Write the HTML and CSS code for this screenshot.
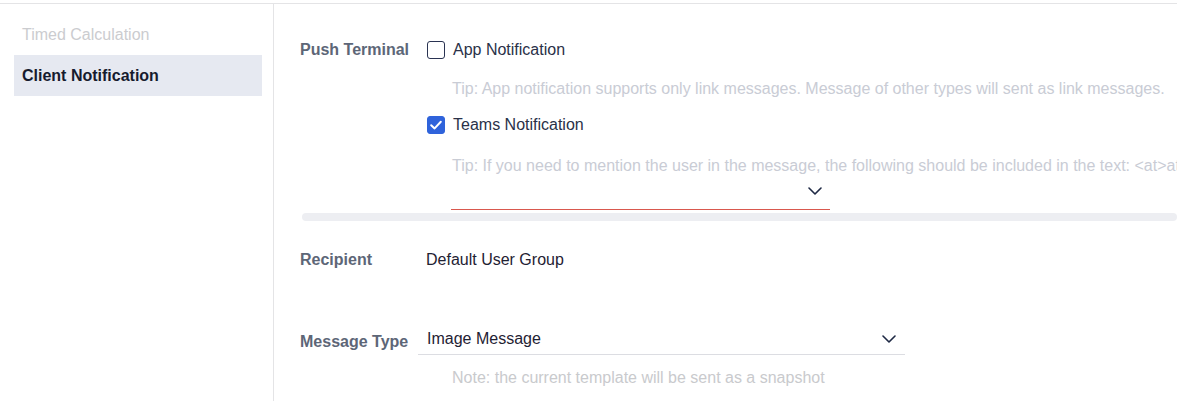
FILE: index.html
```html
<!DOCTYPE html>
<html>
<head>
<meta charset="utf-8">
<link rel="stylesheet" href="styles.css">
</head>
<body>
<div class="frame">
  <aside class="sidebar">
    <div class="nav-item">Timed Calculation</div>
    <div class="nav-item active">Client Notification</div>
  </aside>
  <main class="main">
    <section class="push">
      <div class="row">
        <div class="label label-push">Push Terminal</div>
        <div class="content">
          <div class="opt opt-first">
            <span class="box"></span>
            <span class="opt-text">App Notification</span>
          </div>
          <div class="tip tip-first">Tip: App notification supports only link messages. Message of other types will sent as link messages.</div>
          <div class="opt opt-second">
            <span class="box checked">
              <svg viewBox="0 0 18 18" width="18" height="18"><path d="M4.2 9.2 L7.6 12.4 L13.8 5.8" fill="none" stroke="#fff" stroke-width="2" stroke-linecap="round" stroke-linejoin="round"/></svg>
            </span>
            <span class="opt-text">Teams Notification</span>
          </div>
          <div class="tip tip-second">Tip: If you need to mention the user in the message, the following should be included in the text: &lt;at&gt;at&lt;/at&gt; and the user name will be replaced automatically.</div>
          <div class="select select-teams error">
            <span class="select-value"></span>
            <svg class="chev" viewBox="0 0 14 8" width="14" height="8"><path d="M1 1 L7 7 L13 1" fill="none" stroke="#1e2944" stroke-width="1.6" stroke-linecap="round" stroke-linejoin="round"/></svg>
          </div>
        </div>
      </div>
      <div class="track"></div>
    </section>
    <div class="row row-recipient">
      <div class="label">Recipient</div>
      <div class="content value">Default User Group</div>
    </div>
    <div class="row row-type">
      <div class="label label-type">Message Type</div>
      <div class="content">
        <div class="select select-type">
          <span class="select-value">Image Message</span>
          <svg class="chev" viewBox="0 0 14 8" width="14" height="8"><path d="M1 1 L7 7 L13 1" fill="none" stroke="#1e2944" stroke-width="1.6" stroke-linecap="round" stroke-linejoin="round"/></svg>
        </div>
        <div class="note">Note: the current template will be sent as a snapshot</div>
      </div>
    </div>
  </main>
</div>
</body>
</html>
```
FILE: styles.css
```css
html, body {
  margin: 0;
  padding: 0;
  background: #ffffff;
  overflow: hidden;
}
body {
  font-family: "Liberation Sans", Arial, sans-serif;
  font-size: 16px;
  color: #1f2233;
}
.frame {
  margin-top: 3px;
  border-top: 1px solid #e4e4e6;
  display: flex;
  height: 397px;
}
.sidebar {
  width: 248px;
  flex: 0 0 248px;
  padding: 10px 11px 0 14px;
  border-right: 1px solid #e4e4e6;
}
.nav-item {
  height: 41px;
  line-height: 41px;
  padding-left: 8px;
  color: #cbcccf;
  white-space: nowrap;
}
.nav-item.active {
  background: #e6e9f1;
  color: #161b2e;
  font-weight: bold;
}
.main {
  flex: 1;
  min-width: 0;
  padding-left: 26px;
  padding-top: 31px;
  overflow: hidden;
}
.row {
  display: flex;
}
.label {
  width: 118px;
  flex: 0 0 118px;
  font-weight: bold;
  color: #5d6677;
  line-height: 30px;
  white-space: nowrap;
}
.content {
  flex: 1;
  min-width: 0;
}
.push .content {
  overflow: hidden;
}
.opt {
  display: flex;
  align-items: center;
  height: 30px;
  padding-left: 9px;
}
.opt-second {
  margin-top: 11px;
}
.box {
  width: 16px;
  height: 16px;
  border: 1.5px solid #2a3352;
  border-radius: 3px;
  display: flex;
  align-items: center;
  justify-content: center;
  flex: 0 0 auto;
}
.box.checked {
  background: #2f63db;
  border-color: #2f63db;
}
.box svg {
  flex: 0 0 auto;
}
.opt-text {
  margin-left: 8px;
  color: #2a3148;
  white-space: nowrap;
}
.tip {
  margin-left: 34px;
  line-height: 20px;
  color: #c9ccd5;
  white-space: nowrap;
}
.tip-first {
  margin-top: 14px;
}
.tip-second {
  margin-top: 16px;
}
.select {
  display: flex;
  align-items: center;
  justify-content: space-between;
  border-bottom: 1px solid #dcdde2;
  box-sizing: border-box;
}
.select.error {
  border-bottom-color: #d9584e;
}
.select-teams {
  margin-left: 33px;
  width: 379px;
  height: 34px;
  padding: 0 8px 3px 9px;
}
.select-type {
  width: 487px;
  height: 33px;
  padding: 2px 9px 0 9px;
}
.select-value {
  color: #1f2233;
  white-space: nowrap;
}
.chev {
  flex: 0 0 auto;
}
.track {
  margin-top: 3px;
  margin-left: 2px;
  height: 8px;
  border-radius: 4px;
  background: #edeef2;
}
.row-recipient {
  margin-top: 24px;
}
.value {
  padding-left: 8px;
  line-height: 30px;
  white-space: nowrap;
}
.row-type {
  margin-top: 47px;
}
.label-type {
  padding-top: 5px;
}
.note {
  margin-left: 34px;
  margin-top: 13px;
  line-height: 20px;
  color: #c9cacd;
  white-space: nowrap;
}
```
